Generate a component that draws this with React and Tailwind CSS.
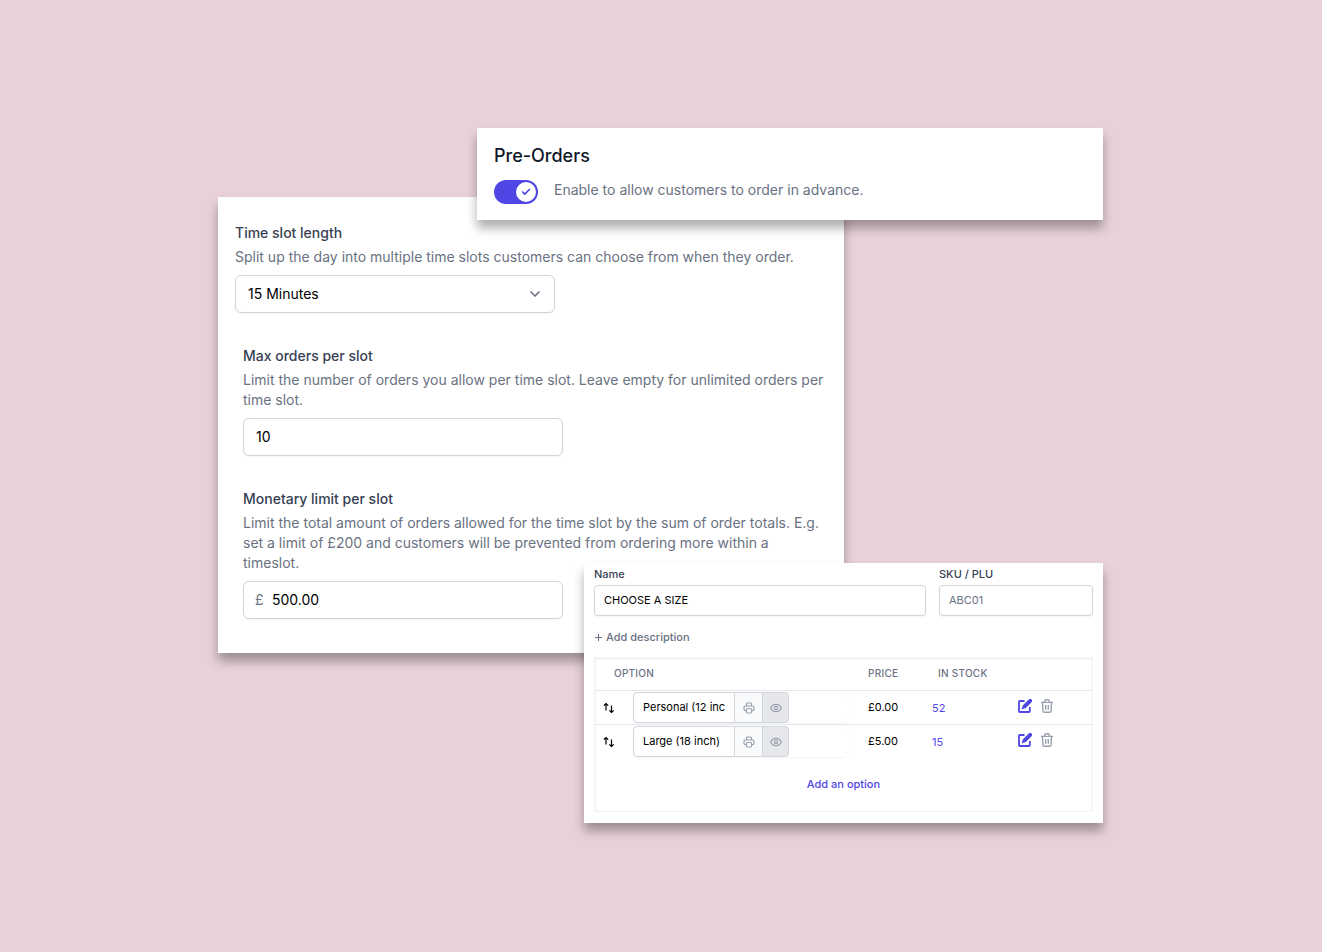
import { useState } from 'react'
import { Check, ChevronDown } from 'lucide-react'

const initialOptions = [
  { id: 1, name: 'Personal (12 inch)', price: '£0.00', stock: 52 },
  { id: 2, name: 'Large (18 inch)', price: '£5.00', stock: 15 },
]

const CARD = 'bg-white shadow-[0_8px_10px_rgba(0,0,0,0.32)]'
const FIELD = 'h-[38px] w-80 max-w-full rounded-md border border-gray-300 bg-white text-sm text-black shadow-xs outline-none focus:border-[#4f46e5]'
const SMALL_FIELD = 'h-[31px] w-full rounded border border-gray-300 bg-white px-[9px] pb-0.5 text-[11px] text-black shadow-xs outline-none placeholder:text-gray-500 focus:border-[#4f46e5]'

const SortIcon = () => (
  <svg width="12" height="12" viewBox="0 0 12 12" fill="none" stroke="currentColor" strokeWidth="1.2">
    <path d="M3 8.5V1.5M.8 3.7 3 1.5l2.200 2.200" />
    <path d="M8.500 3.500v7M6.300 8.300l2.200 2.200 2.200-2.200" />
  </svg>
)

const PlusIcon = () => (
  <svg width="9" height="9" viewBox="0 0 9 9" fill="none" stroke="currentColor">
    <path d="M4.5 1v7M1 4.5h7" />
  </svg>
)

const PrinterIcon = () => (
  <svg width="12" height="12" viewBox="0 0 12 12" fill="none" stroke="currentColor" strokeWidth="1.2" strokeLinejoin="round">
    <path d="M3.5 4V1.9c0-.5.4-.9.9-.9h3.2c.5 0 .9.4.9.9V4" />
    <path d="M3 8.5h-.7A1.3 1.3 0 0 1 1 7.2V5.5C1 4.7 1.7 4 2.5 4h7c.8 0 1.5.7 1.5 1.5v1.7c0 .7-.6 1.3-1.3 1.3H9" />
    <rect x="3.3" y="6.5" width="5.4" height="4.5" rx="1.5" />
  </svg>
)

const EyeIcon = () => (
  <svg width="12" height="12" viewBox="0 0 12 12" fill="none" stroke="currentColor" strokeWidth="1.2">
    <path d="M.7 6C1.8 3.600 3.800 2.300 6 2.300S10.200 3.600 11.300 6C10.200 8.400 8.200 9.700 6 9.700S1.800 8.400.7 6z" />
    <circle cx="6" cy="6" r="1.6" />
  </svg>
)

const EditIcon = () => (
  <svg width="14" height="14" viewBox="0 0 14 14" fill="none" stroke="currentColor">
    <path d="M6.5 2H1.8a.8.8 0 0 0-.8.8v9.400c0 .4.400.8.8.8h9.200c.4 0 .8-.4.8-.8V8" strokeWidth="1.8" />
    <path d="M11.200.9a1.300 1.300 0 0 1 1.900 1.900L7.500 8.500 4.500 9.500 5.500 6.500z" fill="currentColor" strokeWidth="1.2" />
  </svg>
)

const TrashIcon = () => (
  <svg width="12" height="14" viewBox="0 0 12 14" fill="none" stroke="currentColor" strokeWidth="1.4">
    <path d="M0 3.400h12M3.600 3.400V2.200c0-.8.6-1.400 1.400-1.400h2c.8 0 1.400.6 1.400 1.400v1.200" />
    <path d="M1.500 3.400 2 12c0 .7.600 1.200 1.200 1.200h5.600c.6 0 1.200-.5 1.200-1.200l.5-8.600M4.700 6v4.700M7.300 6v4.700" />
  </svg>
)

const Field = ({ id, label, hint, className = '', children }) => (
  <div className={className}>
    <label htmlFor={id} className="block text-sm font-medium text-gray-700">{label}</label>
    <p className="mt-1 mb-2 text-sm text-gray-500">{hint}</p>
    {children}
  </div>
)

const PreOrders = () => {
  const [enabled, setEnabled] = useState(true)

  return (
    <section className={`${CARD} relative z-10 -mb-[23px] w-full max-w-[626px] self-end py-4 pr-4 pl-[17px]`}>
      <h2 className="text-lg/6 font-medium text-gray-900">Pre-Orders</h2>
      <label className="mt-3 flex items-start gap-4">
        <input
          type="checkbox"
          role="switch"
          checked={enabled}
          onChange={(e) => setEnabled(e.target.checked)}
          className="peer sr-only"
        />
        <span className="flex h-6 w-11 shrink-0 justify-start rounded-full bg-gray-200 p-0.5 peer-checked:justify-end peer-checked:bg-[#4f46e5]">
          <span className="flex size-5 items-center justify-center rounded-full bg-white text-[#4f46e5]">
            {enabled && <Check size={10} strokeWidth={4} />}
          </span>
        </span>
        <span className="text-sm text-gray-500">Enable to allow customers to order in advance.</span>
      </label>
    </section>
  )
}

const TimeSlots = () => (
  <section className={`${CARD} flex w-full max-w-[626px] flex-col gap-[33px] self-start px-4 pt-[26px] pb-[34px]`}>
    <Field id="slot-length" label="Time slot length" hint="Split up the day into multiple time slots customers can choose from when they order." className="pl-px">
      <div className="grid w-80 max-w-full items-center">
        <select id="slot-length" defaultValue="15" className={`${FIELD} col-start-1 row-start-1 appearance-none px-3`}>
          <option value="15">15 Minutes</option>
          <option value="30">30 Minutes</option>
          <option value="60">60 Minutes</option>
        </select>
        <ChevronDown size={16} strokeWidth={2.5} className="pointer-events-none col-start-1 row-start-1 mr-3 justify-self-end text-gray-500" />
      </div>
    </Field>

    <Field id="max-orders" label="Max orders per slot" hint="Limit the number of orders you allow per time slot. Leave empty for unlimited orders per time slot." className="pl-[9px]">
      <input id="max-orders" type="text" defaultValue="10" className={`${FIELD} block px-3 pb-0.5`} />
    </Field>

    <Field id="money-limit" label="Monetary limit per slot" hint="Limit the total amount of orders allowed for the time slot by the sum of order totals. E.g. set a limit of £200 and customers will be prevented from ordering more within a timeslot." className="pl-[9px]">
      <div className="grid w-80 max-w-full items-center">
        <input id="money-limit" type="text" defaultValue="500.00" className={`${FIELD} col-start-1 row-start-1 pr-3 pb-0.5 pl-7`} />
        <span className="pointer-events-none col-start-1 row-start-1 pl-3 text-sm text-gray-500">£</span>
      </div>
    </Field>
  </section>
)

const OptionRow = ({ option }) => (
  <tr className="h-[34px]">
    <td className="border-t border-gray-200 pl-2">
      <button type="button" aria-label="Reorder" className="block text-black"><SortIcon /></button>
    </td>
    <td className="border-t border-gray-200">
      <div className="mr-5 flex rounded-md shadow-xs">
        <input
          aria-label="Option name"
          defaultValue={option.name}
          className="h-[31px] w-[102px] rounded-l border border-gray-300 px-[9px] pb-0.5 text-[11px] text-black outline-none"
        />
        <button type="button" aria-label="Print settings" className="flex w-[27px] items-center justify-center border-y border-gray-300 bg-gray-50 text-gray-400">
          <PrinterIcon />
        </button>
        <button type="button" aria-label="Visibility" className="flex w-[27px] items-center justify-center rounded-r border border-gray-300 bg-gray-200 text-gray-400">
          <EyeIcon />
        </button>
      </div>
    </td>
    <td className="border-t border-gray-200 pb-0.5 text-black">{option.price}</td>
    <td className="border-t border-gray-200">
      <a href="#stock" className="text-[#4f46e5]">{option.stock}</a>
    </td>
    <td className="border-t border-gray-200 pb-1">
      <div className="flex items-center gap-[9px]">
        <button type="button" aria-label="Edit option" className="text-[#4f46e5]"><EditIcon /></button>
        <button type="button" aria-label="Delete option" className="text-gray-400"><TrashIcon /></button>
      </div>
    </td>
  </tr>
)

const Options = () => {
  const [options, setOptions] = useState(initialOptions)
  const addOption = () => setOptions([...options, { id: Date.now(), name: '', price: '£0.00', stock: 0 }])

  return (
    <section className={`${CARD} relative z-10 -mt-[90px] w-full max-w-[519px] self-end px-2.5 pt-[3px] pb-[11px] text-[11px]/4`}>
      <div className="flex gap-[13px]">
        <div className="grow">
          <label htmlFor="option-name" className="mb-[3px] block font-medium text-gray-700">Name</label>
          <input id="option-name" type="text" defaultValue="CHOOSE A SIZE" className={SMALL_FIELD} />
        </div>
        <div className="w-[154px]">
          <label htmlFor="sku" className="mb-[3px] block font-medium text-gray-700">SKU / PLU</label>
          <input id="sku" type="text" placeholder="ABC01" className={SMALL_FIELD} />
        </div>
      </div>

      <button type="button" className="mt-[13px] mb-3 flex items-center gap-[3px] font-medium text-gray-500">
        <PlusIcon />
        Add description
      </button>

      <div className="border border-gray-100 shadow-[inset_0_1px_3px_rgba(0,0,0,0.08)]">
        <table className="w-full table-fixed border-separate border-spacing-0 text-left">
          <colgroup>
            <col className="w-[38px]" />
            <col className="w-[235px]" />
            <col className="w-16" />
            <col className="w-[86px]" />
            <col />
          </colgroup>
          <thead>
            <tr className="h-8 text-[10px] tracking-wide text-gray-500">
              <th colSpan={2} className="pb-0.5 pl-[19px] font-medium">OPTION</th>
              <th className="pb-0.5 font-medium">PRICE</th>
              <th className="pb-0.5 pl-1.5 font-medium">IN STOCK</th>
              <th aria-label="Actions" />
            </tr>
          </thead>
          <tbody>
            {options.map((option) => <OptionRow key={option.id} option={option} />)}
          </tbody>
        </table>
        <button type="button" onClick={addOption} className="mx-auto mt-[18px] mb-[19px] block font-medium text-[#4f46e5]">
          Add an option
        </button>
      </div>
    </section>
  )
}

export default function App() {
  return (
    <main className="flex min-h-screen items-center justify-center bg-[#e8d1da] pr-px pb-px font-['Inter',sans-serif]">
      <div className="flex w-full max-w-[885px] flex-col">
        <PreOrders />
        <TimeSlots />
        <Options />
      </div>
    </main>
  )
}
